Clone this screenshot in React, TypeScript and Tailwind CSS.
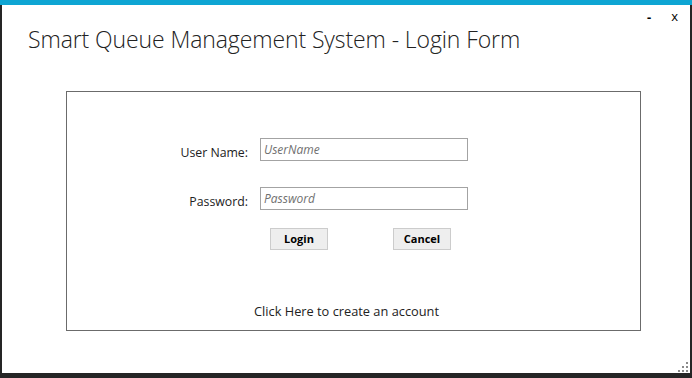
const font = { fontFamily: '"Open Sans", "Noto Sans", sans-serif' }

function Grip() {
  const dots = [
    [8, 0],
    [4, 4],
    [8, 4],
    [0, 8],
    [4, 8],
    [8, 8],
  ]
  return (
    <svg width="10" height="10" className="absolute right-[2px] bottom-[1px]">
      {dots.map(([x, y]) => (
        <rect key={`${x}-${y}`} x={x} y={y} width="2" height="2" fill="#8a8a8a" />
      ))}
    </svg>
  )
}

export default function App() {
  return (
    <div className="w-[692px] h-[378px] bg-[#252525] pl-[2px] pr-[2px] pb-[5px] flex flex-col font-['Open_Sans',sans-serif]">
      <div className="h-[5px] -ml-[2px] -mr-[2px] bg-[#0ea5d3]" />
      <div className="relative flex-1 bg-white flex flex-col">
        {/* caption buttons */}
        <div className="flex justify-end items-start h-[19px] pr-[12px] pt-[5px] text-[13px] leading-[13px] text-black">
          <span className="font-bold mt-[1px] mr-[20px]">-</span>
          <span>x</span>
        </div>

        <h1 className="pl-[26px] text-[23px] leading-[30px] font-light text-[#222] tracking-[-0.1px]">
          Smart Queue Management System - Login Form
        </h1>

        <div className="ml-[64px] mt-[37px] w-[575px] h-[240px] border border-[#6b6b6b] flex flex-col text-[12.3px] text-[#222]">
          <div className="flex items-start mt-[46px]">
            <label className="w-[181px] text-right leading-[17px] mt-[6px]">User Name:</label>
            <input
              className="ml-[12px] w-[208px] h-[23px] border border-[#a3a3a3] px-[3px] text-[12px] italic outline-none placeholder:text-[#707070]"
              placeholder="UserName"
            />
          </div>
          <div className="flex items-start mt-[26px]">
            <label className="w-[181px] text-right leading-[17px] mt-[6px]">Password:</label>
            <input
              type="password"
              className="ml-[12px] w-[208px] h-[23px] border border-[#a3a3a3] px-[3px] text-[12px] italic outline-none placeholder:text-[#707070]"
              placeholder="Password"
            />
          </div>
          <div className="flex mt-[18px] pl-[203px]">
            <button className="w-[58px] h-[22px] bg-[#eeeeee] border border-[#cccccc] text-[11px] font-bold text-black">
              Login
            </button>
            <button className="ml-[65px] w-[58px] h-[22px] bg-[#eeeeee] border border-[#cccccc] text-[11px] font-bold text-black">
              Cancel
            </button>
          </div>
          <p className="mt-auto pb-[11px] pr-[14px] text-center text-[12.8px] leading-[16px] text-[#222]" style={font}>
            Click Here to create an account
          </p>
        </div>
        <Grip />
      </div>
    </div>
  )
}
